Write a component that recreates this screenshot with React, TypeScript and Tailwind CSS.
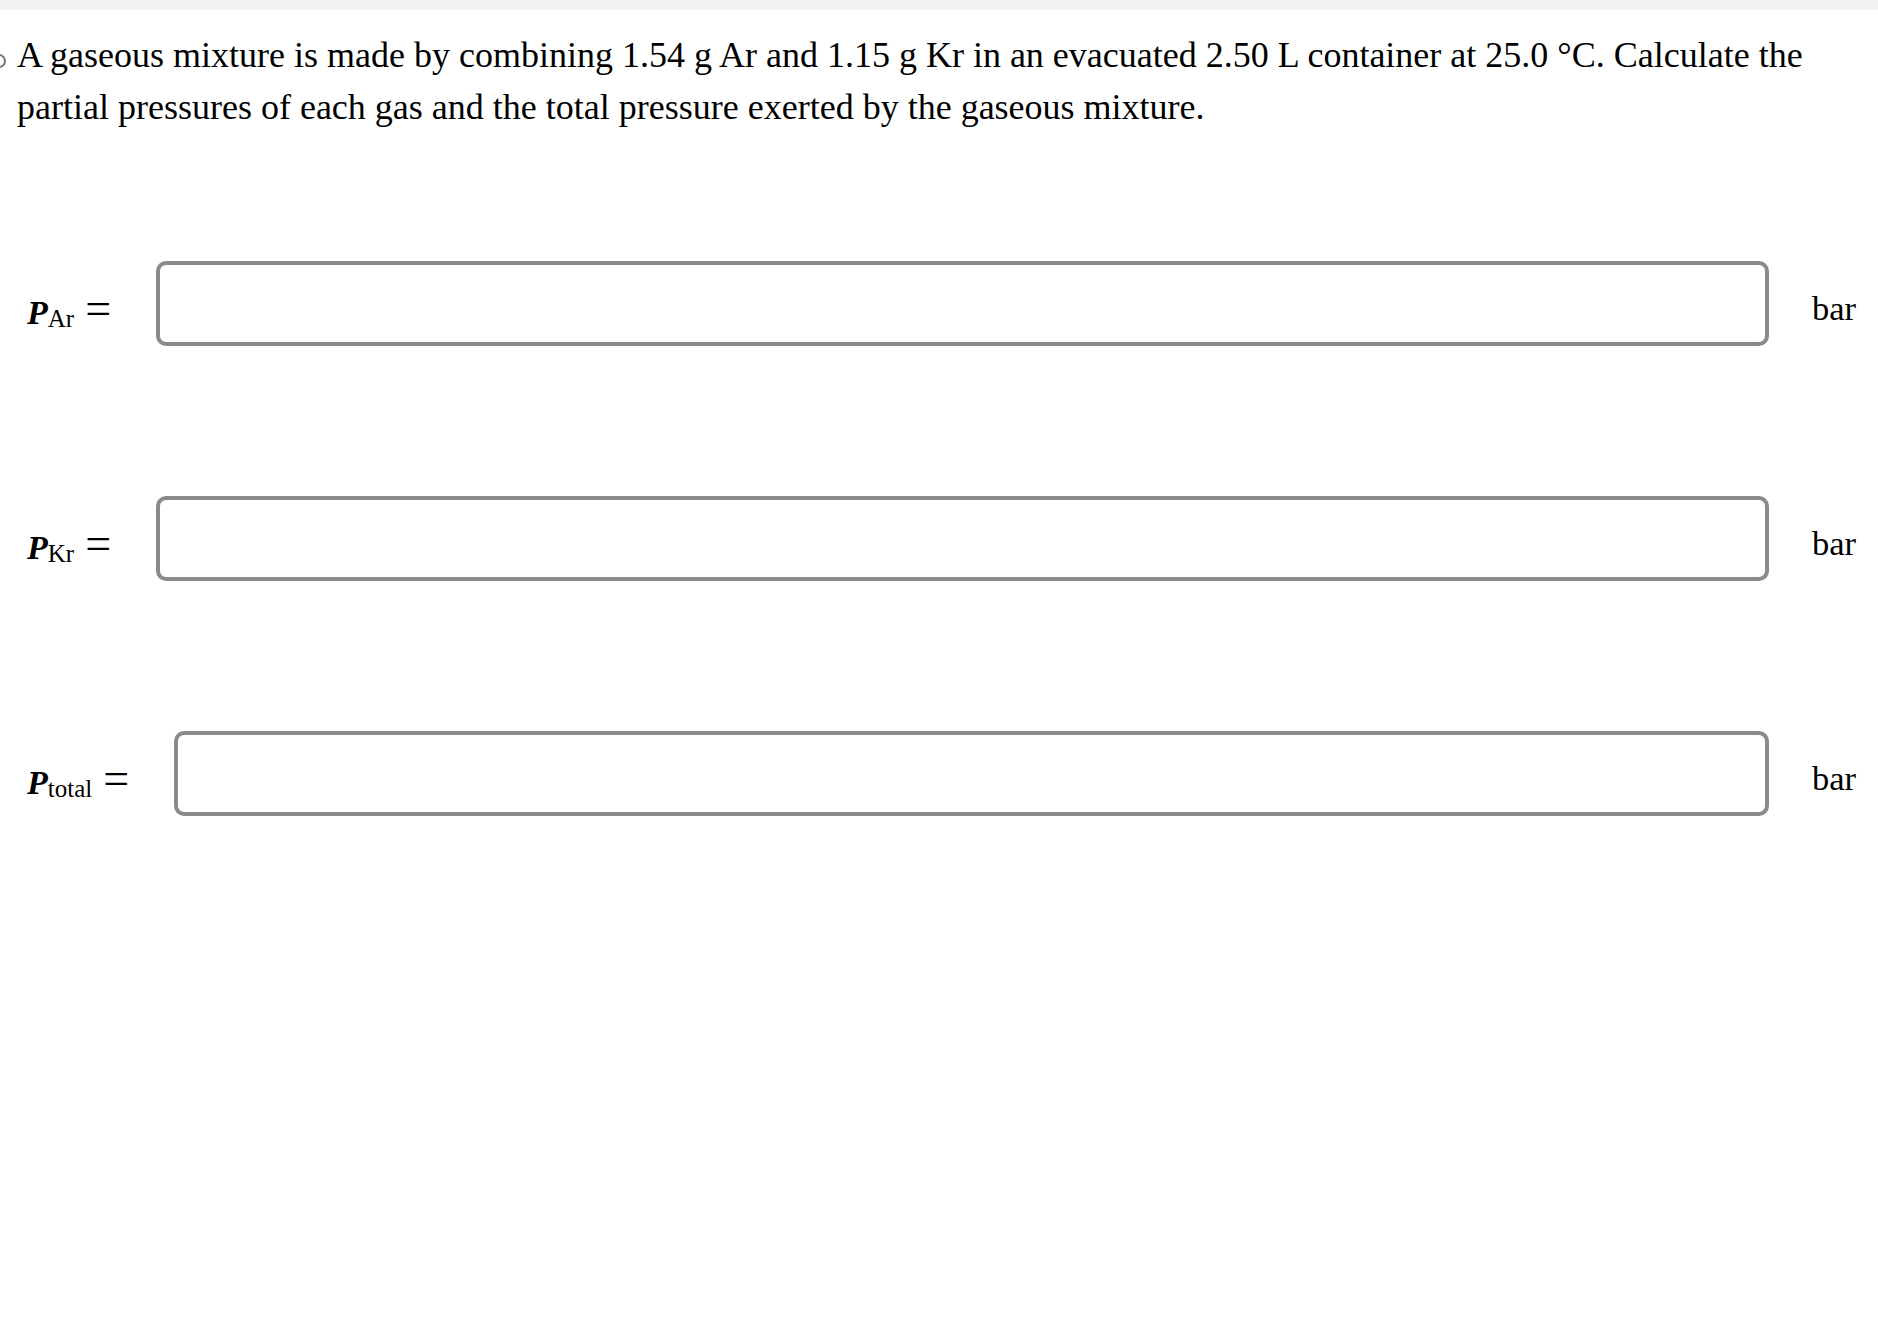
import React from "react";

const serif = { fontFamily: '"Liberation Serif", "Times New Roman", serif' };

function Label({ sub }: { sub: string }) {
  return (
    <div className="relative top-[5px] flex items-baseline whitespace-nowrap text-black" style={serif}>
      <span className="text-[34px] font-bold italic leading-none">P</span>
      <span className="relative top-[3px] text-[25px] leading-none">{sub}</span>
      <span className="ml-[11px] text-[46px] leading-none">=</span>
    </div>
  );
}

function AnswerRow({ sub }: { sub: string }) {
  return (
    <div className="flex h-[85px] items-center pl-[27px] pr-[22px]">
      <Label sub={sub} />
      <div className="ml-[45px] h-[85px] flex-1 rounded-[10px] border-4 border-[#8a8a8a] bg-white" />
      <span className="relative top-[5px] ml-[43px] text-[34.5px] leading-none text-black" style={serif}>
        bar
      </span>
    </div>
  );
}

export default function App() {
  return (
    <div className="relative min-h-screen overflow-hidden bg-white">
      {/* top strip */}
      <div className="h-[10px] bg-[#f2f2f2]" />

      {/* clipped radio circle */}
      <div className="absolute left-[-8px] top-[54px] h-[14px] w-[14px] rounded-full border-[2px] border-[#777]" />

      <p className="mt-[19px] pl-[17px] pr-[40px] text-[36px] leading-[52px] text-black" style={serif}>
        A gaseous mixture is made by combining 1.54 g Ar and 1.15 g Kr in an evacuated 2.50 L container at 25.0 °C. Calculate the
        partial pressures of each gas and the total pressure exerted by the gaseous mixture.
      </p>

      <div className="mt-[128px] flex flex-col gap-[150px]">
        <AnswerRow sub="Ar" />
        <AnswerRow sub="Kr" />
        <AnswerRow sub="total" />
      </div>
    </div>
  );
}
